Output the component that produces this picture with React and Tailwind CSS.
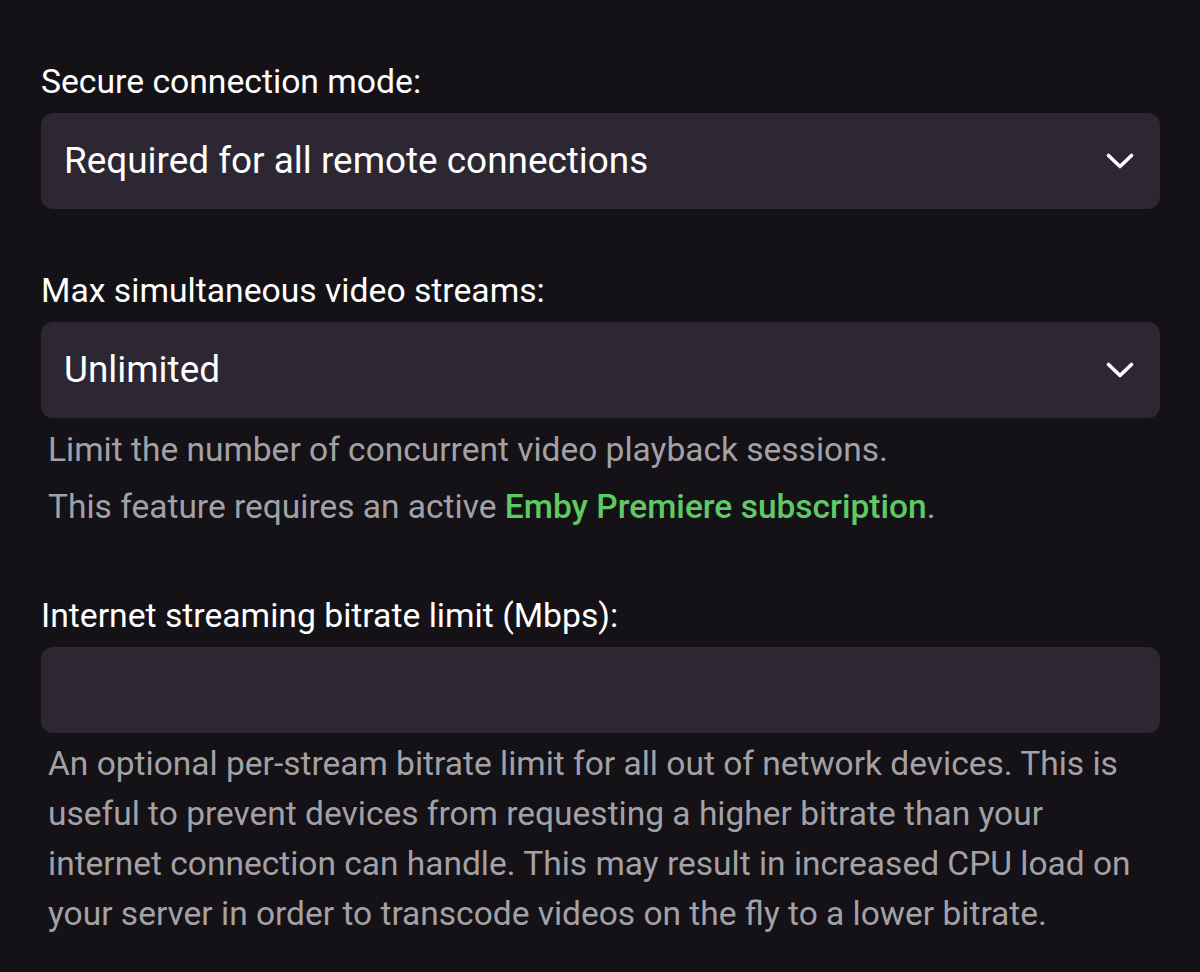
import React from 'react';

const Chevron = () => (
    <svg width="30" height="18" viewBox="0 0 30 18" fill="none" stroke="currentColor" strokeWidth="3.6" strokeLinecap="round" strokeLinejoin="round">
        <path d="M3.5 3.5L15 14.5L26.5 3.5" />
    </svg>
);

const SelectField = ({ label, value }) => (
    <div>
        <div className="text-[33.7px] leading-[40px] text-white">{label}</div>
        <div className="mt-[11px] h-[96px] rounded-xl bg-[#2c2732] flex items-center justify-between pl-[23px] pr-[25px]">
            <span className="text-[36.9px] text-white">{value}</span>
            <span className="text-white"><Chevron /></span>
        </div>
    </div>
);

export default function App() {
    return (
        <div className="min-h-screen bg-[#141216] pl-[41px] pr-[40px] pt-[62px]" style={{ fontFamily: 'Roboto, "Noto Sans", sans-serif' }}>
            <SelectField label="Secure connection mode:" value="Required for all remote connections" />

            <div className="mt-[62px]">
                <SelectField label="Max simultaneous video streams:" value="Unlimited" />
                <div className="pl-[7px] text-[33.5px] text-[#a3a1a6] mt-[12px]">
                    <p className="leading-[40px]">Limit the number of concurrent video playback sessions.</p>
                    <p className="leading-[40px] mt-[17px]">
                        This feature requires an active{' '}
                        <a className="text-[#5fc964] font-medium">Emby Premiere subscription</a>.
                    </p>
                </div>
            </div>

            <div className="mt-[69px]">
                <div className="text-[33.7px] leading-[40px] text-white">Internet streaming bitrate limit (Mbps):</div>
                <div className="mt-[11px] h-[86px] rounded-xl bg-[#2c2732]" />
                <p className="pl-[7px] mt-[6px] text-[33.5px] leading-[50px] text-[#a3a1a6]">
                    An optional per-stream bitrate limit for all out of network devices. This is useful to prevent devices from requesting a higher bitrate than your internet connection can handle. This may result in increased CPU load on your server in order to transcode videos on the fly to a lower bitrate.
                </p>
            </div>
        </div>
    );
}
